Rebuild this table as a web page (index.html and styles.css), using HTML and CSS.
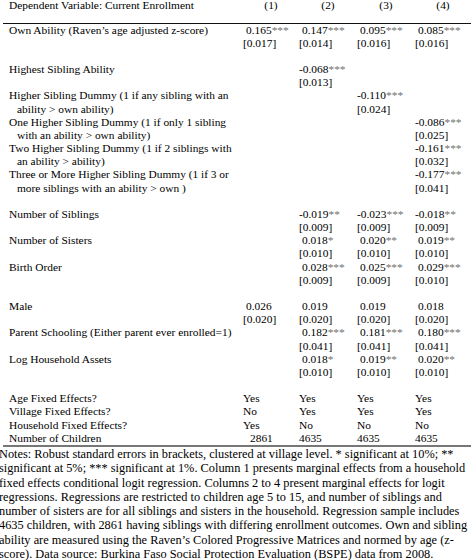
FILE: index.html
```html
<!DOCTYPE html>
<html>
<head>
<meta charset="utf-8">
<link rel="stylesheet" href="styles.css">
</head>
<body>
<div class="page">
<table class="reg">
<colgroup><col class="c-lab"><col class="c1"><col class="c2"><col class="c3"><col class="c4"></colgroup>
<thead>
<tr class="head"><th class="lab">Dependent Variable: Current Enrollment</th><th>(1)</th><th>(2)</th><th>(3)</th><th>(4)</th></tr>
</thead>
<tbody>
<tr><td class="lab">Own Ability (Raven’s age adjusted z-score)</td><td><span class="p">0.165<i>***</i></span><br>[0.017]</td><td><span class="p">0.147<i>***</i></span><br>[0.014]</td><td><span class="p">0.095<i>***</i></span><br>[0.016]</td><td><span class="p">0.085<i>***</i></span><br>[0.016]</td></tr>
<tr class="gap"><td colspan="5"></td></tr>
<tr><td class="lab">Highest Sibling Ability</td><td></td><td>-0.068<i>***</i><br>[0.013]</td><td></td><td></td></tr>
<tr><td class="lab">Higher Sibling Dummy (1 if any sibling with an<br>ability &gt; own ability)</td><td></td><td></td><td>-0.110<i>***</i><br>[0.024]</td><td></td></tr>
<tr><td class="lab">One Higher Sibling Dummy (1 if only 1 sibling<br>with an ability &gt; own ability)</td><td></td><td></td><td></td><td>-0.086<i>***</i><br>[0.025]</td></tr>
<tr><td class="lab">Two Higher Sibling Dummy (1 if 2 siblings with<br>an ability &gt; ability)</td><td></td><td></td><td></td><td>-0.161<i>***</i><br>[0.032]</td></tr>
<tr><td class="lab">Three or More Higher Sibling Dummy (1 if 3 or<br>more siblings with an ability &gt; own )</td><td></td><td></td><td></td><td>-0.177<i>***</i><br>[0.041]</td></tr>
<tr class="gap"><td colspan="5"></td></tr>
<tr><td class="lab">Number of Siblings</td><td></td><td>-0.019<i>**</i><br>[0.009]</td><td>-0.023<i>***</i><br>[0.009]</td><td>-0.018<i>**</i><br>[0.009]</td></tr>
<tr><td class="lab">Number of Sisters</td><td></td><td><span class="p">0.018<i>*</i></span><br>[0.010]</td><td><span class="p">0.020<i>**</i></span><br>[0.010]</td><td><span class="p">0.019<i>**</i></span><br>[0.010]</td></tr>
<tr><td class="lab">Birth Order</td><td></td><td><span class="p">0.028<i>***</i></span><br>[0.009]</td><td><span class="p">0.025<i>***</i></span><br>[0.009]</td><td><span class="p">0.029<i>***</i></span><br>[0.010]</td></tr>
<tr class="gap"><td colspan="5"></td></tr>
<tr><td class="lab">Male</td><td><span class="p">0.026</span><br>[0.020]</td><td><span class="p">0.019</span><br>[0.020]</td><td><span class="p">0.019</span><br>[0.020]</td><td><span class="p">0.018</span><br>[0.020]</td></tr>
<tr><td class="lab">Parent Schooling (Either parent ever enrolled=1)</td><td></td><td><span class="p">0.182<i>***</i></span><br>[0.041]</td><td><span class="p">0.181<i>***</i></span><br>[0.041]</td><td><span class="p">0.180<i>***</i></span><br>[0.041]</td></tr>
<tr><td class="lab">Log Household Assets</td><td></td><td><span class="p">0.018<i>*</i></span><br>[0.010]</td><td><span class="p">0.019<i>**</i></span><br>[0.010]</td><td><span class="p">0.020<i>**</i></span><br>[0.010]</td></tr>
<tr class="gap"><td colspan="5"></td></tr>
<tr><td class="lab">Age Fixed Effects?</td><td>Yes</td><td>Yes</td><td>Yes</td><td>Yes</td></tr>
<tr><td class="lab">Village Fixed Effects?</td><td>No</td><td>Yes</td><td>Yes</td><td>Yes</td></tr>
<tr><td class="lab">Household Fixed Effects?</td><td>Yes</td><td>No</td><td>No</td><td>No</td></tr>
<tr class="last"><td class="lab">Number of Children</td><td><span class="n1">2861</span></td><td>4635</td><td>4635</td><td>4635</td></tr>
</tbody>
</table>
<p class="notes">Notes: Robust standard errors in brackets, clustered at village level. * significant at 10%; **<br>significant at 5%; *** significant at 1%. Column 1 presents marginal effects from a household<br>fixed effects conditional logit regression. Columns 2 to 4 present marginal effects for logit<br>regressions. Regressions are restricted to children age 5 to 15, and number of siblings and<br>number of sisters are for all siblings and sisters in the household. Regression sample includes<br>4635 children, with 2861 having siblings with differing enrollment outcomes. Own and sibling<br>ability are measured using the Raven’s Colored Progressive Matrices and normed by age (z-<br>score). Data source: Burkina Faso Social Protection Evaluation (BSPE) data from 2008.</p>
</div>
</body>
</html>
```

FILE: styles.css
```css
html, body {
  margin: 0;
  padding: 0;
  background: #fff;
}
.page {
  width: 474px;
  height: 560px;
  overflow: hidden;
  font-family: "Liberation Serif", "Times New Roman", serif;
  color: #000;
}
.reg {
  margin: 0 3px;
  width: 468px;
  border-collapse: collapse;
  table-layout: fixed;
  font-size: 11.4px;
  line-height: 13.17px;
}
.c-lab { width: 240px; }
.c1 { width: 56px; }
.c2 { width: 58px; }
.c3 { width: 58px; }
.c4 { width: 56px; }
.reg th, .reg td {
  padding: 0;
  text-align: left;
  vertical-align: top;
  font-weight: normal;
  white-space: nowrap;
}
.reg td.lab, .reg th.lab {
  padding-left: 14px;
  text-indent: -8px;
}
.reg th.lab {
  padding-left: 6px;
  text-indent: 0;
}
.head th {
  line-height: 11px;
  padding-bottom: 11.5px;
  border-bottom: 1px solid #111;
  text-align: center;
}
.head th.lab { text-align: left; }
.gap td { height: 13.17px; }
.last td { border-bottom: 2px solid #777; }
.p { padding-left: 3px; }
.n1 { padding-left: 7px; }
.reg i {
  font-style: normal;
  color: #707070;
}
.notes {
  margin: 0 0 0 -1px;
  font-size: 12.35px;
  line-height: 14.3px;
  white-space: nowrap;
}
```
